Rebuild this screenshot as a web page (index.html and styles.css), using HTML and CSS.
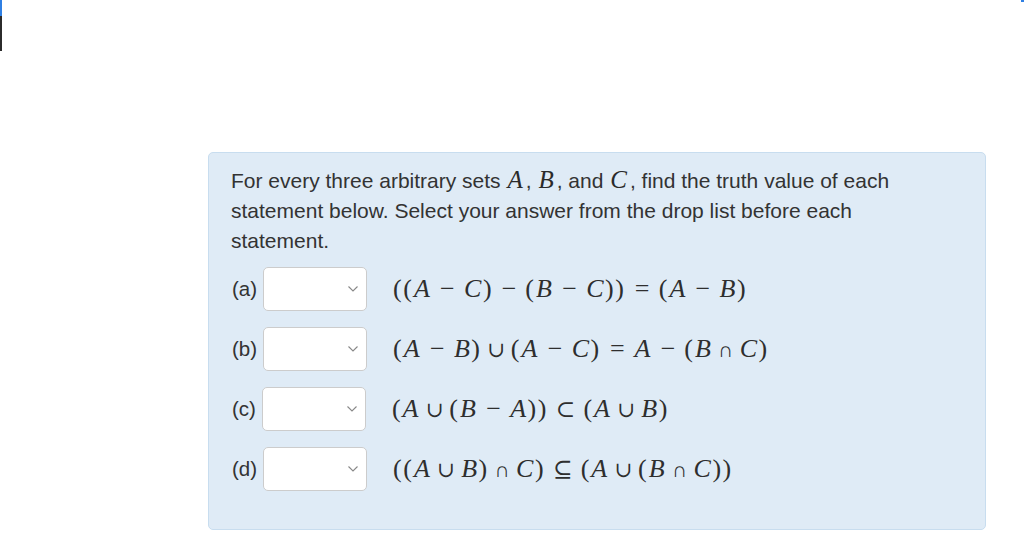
FILE: index.html
```html
<!DOCTYPE html>
<html>
<head>
<meta charset="utf-8">
<link rel="stylesheet" href="styles.css">
</head>
<body>
<div class="edge-mark"></div>
<div class="corner-mark"></div>
<div class="page">
  <div class="panel">
    <p class="intro">For every three arbitrary sets <span class="mi">A</span>, <span class="mi">B</span>, and <span class="mi">C</span>, find the truth value of each statement below. Select your answer from the drop list before each statement.</p>
    <div class="rows">
      <div class="row">
        <span class="label">(a)</span>
        <div class="select"><svg class="chev" width="10" height="6" viewBox="0 0 10 6"><path d="M0.5 0.5 L5 5 L9.5 0.5" fill="none" stroke="#888" stroke-width="1.1"/></svg></div>
        <span class="math"><span class="mo">((</span><span class="mi">A</span><span class="bin">−</span><span class="mi">C</span><span class="mo">)</span><span class="bin">−</span><span class="mo">(</span><span class="mi">B</span><span class="bin">−</span><span class="mi">C</span><span class="mo">))</span><span class="rel">=</span><span class="mo">(</span><span class="mi">A</span><span class="bin">−</span><span class="mi">B</span><span class="mo">)</span></span>
      </div>
      <div class="row">
        <span class="label">(b)</span>
        <div class="select"><svg class="chev" width="10" height="6" viewBox="0 0 10 6"><path d="M0.5 0.5 L5 5 L9.5 0.5" fill="none" stroke="#888" stroke-width="1.1"/></svg></div>
        <span class="math"><span class="mo">(</span><span class="mi">A</span><span class="bin">−</span><span class="mi">B</span><span class="mo">)</span><span class="setop">∪</span><span class="mo">(</span><span class="mi">A</span><span class="bin">−</span><span class="mi">C</span><span class="mo">)</span><span class="rel">=</span><span class="mi">A</span><span class="bin">−</span><span class="mo">(</span><span class="mi">B</span><span class="setop">∩</span><span class="mi">C</span><span class="mo">)</span></span>
      </div>
      <div class="row">
        <span class="label">(c)</span>
        <div class="select"><svg class="chev" width="10" height="6" viewBox="0 0 10 6"><path d="M0.5 0.5 L5 5 L9.5 0.5" fill="none" stroke="#888" stroke-width="1.1"/></svg></div>
        <span class="math"><span class="mo">(</span><span class="mi">A</span><span class="setop">∪</span><span class="mo">(</span><span class="mi">B</span><span class="bin">−</span><span class="mi">A</span><span class="mo">))</span><span class="subset">⊂</span><span class="mo">(</span><span class="mi">A</span><span class="setop">∪</span><span class="mi">B</span><span class="mo">)</span></span>
      </div>
      <div class="row">
        <span class="label">(d)</span>
        <div class="select"><svg class="chev" width="10" height="6" viewBox="0 0 10 6"><path d="M0.5 0.5 L5 5 L9.5 0.5" fill="none" stroke="#888" stroke-width="1.1"/></svg></div>
        <span class="math"><span class="mo">((</span><span class="mi">A</span><span class="setop">∪</span><span class="mi">B</span><span class="mo">)</span><span class="setop">∩</span><span class="mi">C</span><span class="mo">)</span><span class="subset">⊆</span><span class="mo">(</span><span class="mi">A</span><span class="setop">∪</span><span class="mo">(</span><span class="mi">B</span><span class="setop">∩</span><span class="mi">C</span><span class="mo">))</span></span>
      </div>
    </div>
  </div>
</div>
</body>
</html>
```
FILE: styles.css
```css
html, body {
  margin: 0;
  padding: 0;
  background: #ffffff;
}
body {
  font-family: "Liberation Sans", Arial, sans-serif;
  color: #333333;
}
.edge-mark {
  position: absolute;
  left: 0;
  top: 0;
  width: 2px;
  height: 51px;
  background: linear-gradient(to bottom, #2f7fe3 0, #2f7fe3 16px, #2b2b2b 16px, #2b2b2b 51px);
}
.corner-mark {
  position: absolute;
  right: 0;
  top: 0;
  width: 3px;
  height: 2px;
  background: #2f7fe3;
}
.page {
  padding: 152px 0 0 208px;
}
.panel {
  box-sizing: border-box;
  width: 778px;
  background: #dfebf6;
  border: 1px solid #c8ddef;
  border-radius: 5px;
  padding: 13px 22px 38px 22px;
}
.intro {
  margin: 0;
  font-size: 21px;
  line-height: 30px;
  width: 700px;
}
.intro .mi {
  font-family: "Liberation Serif", "Times New Roman", serif;
  font-style: italic;
  font-size: 25px;
  line-height: 20px;
  letter-spacing: 3px;
  margin-left: 1px;
  color: #2a2a2a;
}
.rows {
  margin-top: 11px;
  display: flex;
  flex-direction: column;
  gap: 16px;
}
.row {
  display: flex;
  align-items: center;
  height: 44px;
}
.label {
  font-size: 20.5px;
  margin-right: 6px;
  margin-left: 1px;
}
.select {
  box-sizing: border-box;
  width: 104px;
  height: 44px;
  background: #ffffff;
  border: 1px solid #cccccc;
  border-radius: 5px;
  display: flex;
  align-items: center;
  justify-content: flex-end;
  padding-right: 8px;
}
.chev {
  display: block;
}
.math {
  margin-left: 26px;
  font-family: "Liberation Serif", "DejaVu Serif", serif;
  font-size: 26px;
  color: #2e2e2e;
  white-space: nowrap;
}
.math .mi {
  font-style: italic;
  letter-spacing: 1.5px;
  margin-left: 0.5px;
}
.math .mo {
  font-style: normal;
  letter-spacing: 1.5px;
}
.math .bin {
  margin: 0 calc(0.3em + 1px);
}
.math .setop {
  font-size: 0.82em;
  margin: 0 0.27em;
}
.math .rel {
  margin: 0 0.36em;
}
.math .subset {
  font-size: 0.9em;
  margin: 0 0.34em;
}
```
